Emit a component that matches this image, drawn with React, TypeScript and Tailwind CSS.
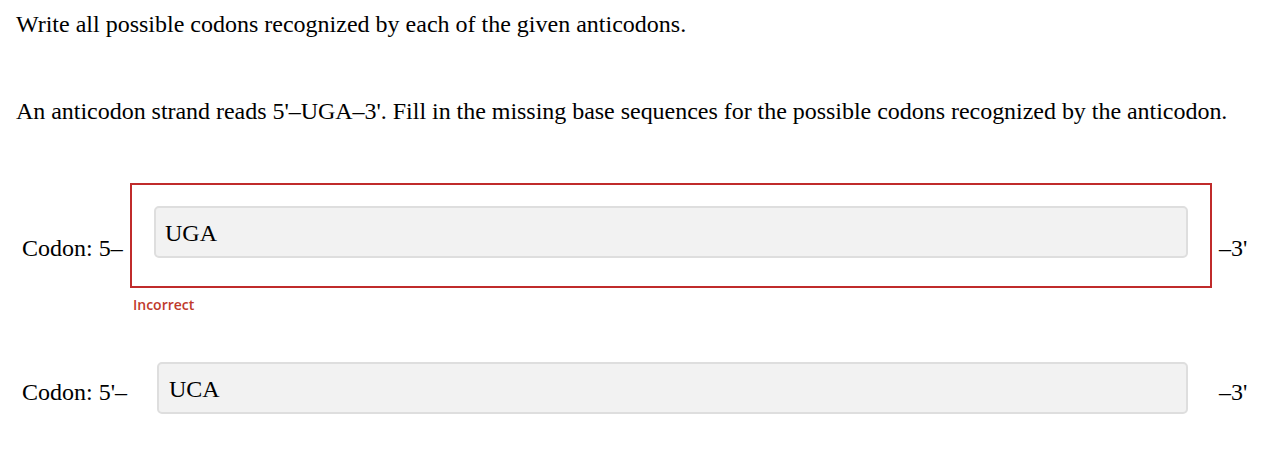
import React from "react";

export default function App() {
  return (
    <div className="w-[1270px] h-[460px] bg-white text-black font-['Liberation_Serif',serif] text-[24px] leading-[28px] overflow-hidden">
      <p className="pl-4 pt-[10px]">Write all possible codons recognized by each of the given anticodons.</p>
      <p className="pl-4 mt-[59px] tracking-[-0.03px]">
        An anticodon strand reads 5'–UGA–3'. Fill in the missing base sequences for the possible codons recognized by the anticodon.
      </p>

      <div className="flex items-start mt-[58px]">
        <div className="pl-[22px] w-[130px] mt-[51px] whitespace-nowrap">Codon: 5–</div>
        <div>
          <div className="w-[1082px] border-2 border-[#c02b2b] pl-[22px] pr-[22px] pt-[21px] pb-[28px]">
            <div className="h-[52px] w-full rounded-[5px] border-2 border-[#dedede] bg-[#f2f2f2] pl-[9px] pt-[2px] flex items-center">
              UGA
            </div>
          </div>
          <div className="pl-[3px] mt-[8px] font-['Open_Sans',sans-serif] font-semibold text-[14px] leading-[18px] text-[#c0392b]">
            Incorrect
          </div>
        </div>
        <div className="ml-[7px] mt-[51px] whitespace-nowrap">–3'</div>
      </div>

      <div className="flex items-start mt-[48px]">
        <div className="pl-[22px] w-[157px] mt-[16px] whitespace-nowrap">Codon: 5'–</div>
        <div className="h-[52px] w-[1031px] rounded-[5px] border-2 border-[#dedede] bg-[#f2f2f2] pl-[10px] pt-[2px] flex items-center">
          UCA
        </div>
        <div className="ml-[31px] mt-[16px] whitespace-nowrap">–3'</div>
      </div>
    </div>
  );
}
